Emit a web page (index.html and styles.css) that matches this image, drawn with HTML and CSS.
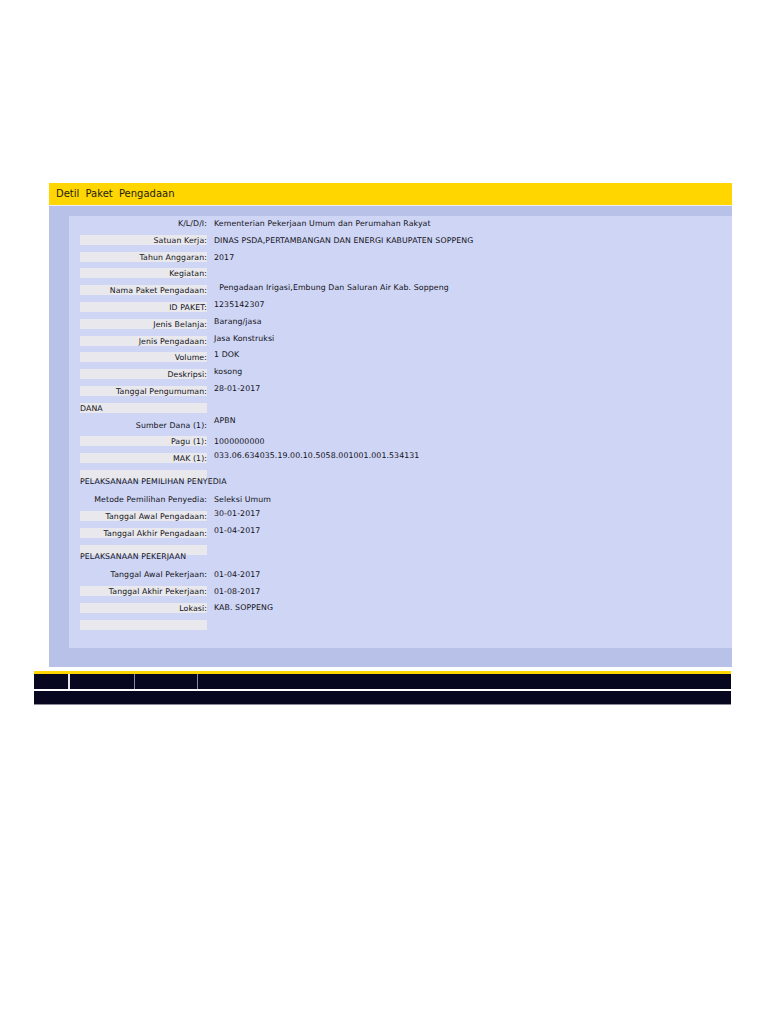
FILE: index.html
```html
<!DOCTYPE html>
<html>
<head>
<meta charset="utf-8">
<title>Detil Paket Pengadaan</title>
<link rel="stylesheet" href="styles.css">
</head>
<body>
<div class="page">
  <section class="panel">
    <div class="panel-head">Detil Paket Pengadaan</div>
    <div class="band">
      <div class="inner">
        <div class="row first"><div class="lbl plain">K/L/D/I:</div><div class="val">Kementerian Pekerjaan Umum dan Perumahan Rakyat</div></div>
        <div class="row"><div class="lbl">Satuan Kerja:</div><div class="val">DINAS PSDA,PERTAMBANGAN DAN ENERGI KABUPATEN SOPPENG</div></div>
        <div class="row"><div class="lbl">Tahun Anggaran:</div><div class="val">2017</div></div>
        <div class="row"><div class="lbl">Kegiatan:</div><div class="val"></div></div>
        <div class="row"><div class="lbl">Nama Paket Pengadaan:</div><div class="val up"> &nbsp;Pengadaan Irigasi,Embung Dan Saluran Air Kab. Soppeng</div></div>
        <div class="row"><div class="lbl">ID PAKET:</div><div class="val up">1235142307</div></div>
        <div class="row"><div class="lbl">Jenis Belanja:</div><div class="val up">Barang/jasa</div></div>
        <div class="row"><div class="lbl">Jenis Pengadaan:</div><div class="val up">Jasa Konstruksi</div></div>
        <div class="row"><div class="lbl">Volume:</div><div class="val up">1 DOK</div></div>
        <div class="row"><div class="lbl">Deskripsi:</div><div class="val up">kosong</div></div>
        <div class="row"><div class="lbl">Tanggal Pengumuman:</div><div class="val up">28-01-2017</div></div>
        <div class="row"><div class="lbl head">DANA</div></div>
        <div class="row"><div class="lbl plain">Sumber Dana (1):</div><div class="val up2">APBN</div></div>
        <div class="row"><div class="lbl">Pagu (1):</div><div class="val">1000000000</div></div>
        <div class="row"><div class="lbl">MAK (1):</div><div class="val up">033.06.634035.19.00.10.5058.001001.001.534131</div></div>
        <div class="sec"><div class="lbl"></div><div class="sec-title">PELAKSANAAN PEMILIHAN PENYEDIA</div></div>
        <div class="row"><div class="lbl plain">Metode Pemilihan Penyedia:</div><div class="val">Seleksi Umum</div></div>
        <div class="row"><div class="lbl">Tanggal Awal Pengadaan:</div><div class="val up">30-01-2017</div></div>
        <div class="row"><div class="lbl">Tanggal Akhir Pengadaan:</div><div class="val up">01-04-2017</div></div>
        <div class="sec"><div class="lbl"></div><div class="sec-title">PELAKSANAAN PEKERJAAN</div></div>
        <div class="row"><div class="lbl plain">Tanggal Awal Pekerjaan:</div><div class="val">01-04-2017</div></div>
        <div class="row"><div class="lbl">Tanggal Akhir Pekerjaan:</div><div class="val">01-08-2017</div></div>
        <div class="row"><div class="lbl">Lokasi:</div><div class="val lok">KAB. SOPPENG</div></div>
        <div class="row"><div class="lbl"></div></div>
      </div>
    </div>
  </section>
  <div class="bars">
    <div class="bar-top">
      <div class="cell c1"></div>
      <div class="cell c2"></div>
      <div class="cell c3"></div>
      <div class="cell c4"></div>
    </div>
    <div class="bar-bottom"></div>
  </div>
</div>
</body>
</html>
```

FILE: styles.css
```css
html, body {
  margin: 0;
  padding: 0;
  background: #ffffff;
}

.page {
  padding-top: 183px;
  font-family: "DejaVu Sans", Verdana, sans-serif;
  color: #111118;
}

.panel {
  margin-left: 49px;
  width: 683px;
}

.panel-head {
  height: 22px;
  line-height: 21px;
  background: #ffd600;
  border-bottom: 1px solid #eef0f8;
  padding-left: 7px;
  font-size: 10px;
  word-spacing: 3px;
  color: #1e1c10;
}

.band {
  background: #b8c1e8;
  padding: 10px 0 19px 20px;
}

.inner {
  background: #cfd5f4;
  height: 432px;
  padding-top: 2px;
  box-sizing: border-box;
}

.row {
  height: 16.8px;
  display: flex;
  align-items: flex-start;
  font-size: 7.8px;
  letter-spacing: 0.1px;
}

.lbl {
  margin-left: 11px;
  width: 127px;
  height: 10px;
  flex: none;
  background: #e8e8ed;
  text-align: right;
  line-height: 12px;
  white-space: nowrap;
}

.lbl.plain {
  background: transparent;
}

.lbl.head {
  text-align: left;
  line-height: 11px;
}

.val {
  margin-left: 7px;
  line-height: 12px;
  white-space: pre;
}

.val.up {
  margin-top: -3px;
}

.val.up2 {
  margin-top: -5px;
}

.val.lok {
  margin-top: -1px;
}

.sec {
  height: 24.5px;
  font-size: 7.8px;
  letter-spacing: 0.1px;
}

.sec-title {
  margin-left: 11px;
  margin-top: -4px;
  line-height: 12px;
  white-space: nowrap;
}

.bars {
  margin-top: 4px;
  margin-left: 34px;
  width: 697px;
}

.bar-top {
  display: flex;
  height: 15px;
  border-top: 3px solid #ffd600;
  background: #070720;
}

.cell {
  height: 100%;
  box-sizing: border-box;
}

.c1 {
  width: 36px;
  border-right: 2px solid #e4e4ea;
}

.c2 {
  width: 65px;
  border-right: 1px solid #8a8a98;
}

.c3 {
  width: 63px;
  border-right: 1px solid #8a8a98;
}

.c4 {
  flex: 1;
}

.bar-bottom {
  margin-top: 2px;
  height: 13px;
  background: #070720;
  border-bottom: 1px solid #8a8a98;
}
```
